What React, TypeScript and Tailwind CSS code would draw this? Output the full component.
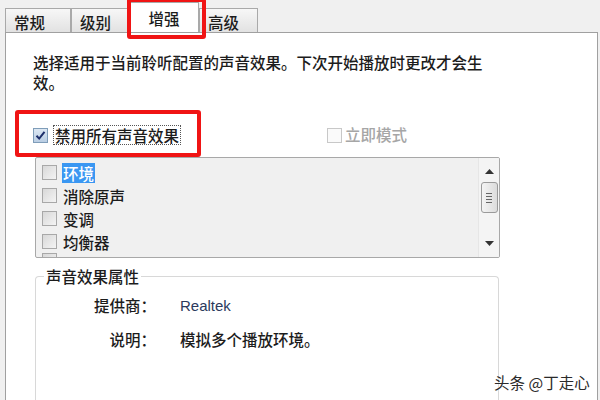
import React from "react";

const FONT = { fontFamily: '"Noto Sans CJK SC", "Noto Sans", sans-serif' };

function Box({ checked = false, disabled = false }: { checked?: boolean; disabled?: boolean }) {
  return (
    <div
      className={
        "w-[15px] h-[15px] shrink-0 flex items-center justify-center border " +
        (disabled
          ? "border-[#c8c8c8] bg-[#fafafa]"
          : checked
          ? "border-[#7f9db9] bg-gradient-to-b from-[#dde8f3] to-[#b9cde3]"
          : "border-[#a8a8a8] bg-gradient-to-br from-[#d8d8d8] to-[#f4f4f4]")
      }
    >
      {checked && (
        <svg width="11" height="11" viewBox="0 0 11 11">
          <path d="M1.5 5.8 L4.2 8.6 L9.5 1.8" fill="none" stroke="#1d2f6b" strokeWidth="2" />
        </svg>
      )}
    </div>
  );
}

function Tab({ label, w, active = false }: { label: string; w: string; active?: boolean }) {
  return (
    <div
      className={
        "border border-[#a9a9a9] border-b-0 flex items-start text-[15.5px] font-medium text-[#1c1c1c] leading-[20px] " +
        w +
        (active ? " h-[30px] bg-white pt-[5px] justify-center" : " h-[24px] bg-gradient-to-b from-[#f7f7f7] to-[#e2e2e2] pt-[3px] pl-[8px]")
      }
    >
      {label}
    </div>
  );
}

export default function App() {
  const items = ["环境", "消除原声", "变调", "均衡器"];
  return (
    <div className="w-[600px] h-[400px] bg-[#f0f0f0] relative overflow-hidden" style={FONT}>
      {/* tabs */}
      <div className="h-[32px] flex items-end pl-[5px]">
        <Tab label="常规" w="w-[66px]" />
        <Tab label="级别" w="w-[58px]" />
        <Tab label="增强" w="w-[70px]" active />
        <Tab label="高级" w="w-[59px]" />
      </div>

      {/* panel */}
      <div className="ml-[5px] w-[593px] h-[368px] border border-b-0 border-[#a0a0a0] bg-white pl-[27px] pt-[19px] text-[#1c1c1c] font-medium">
        <div className="text-[15.5px] leading-[20px] whitespace-nowrap">
          <div>选择适用于当前聆听配置的声音效果。下次开始播放时更改才会生</div>
          <div>效。</div>
        </div>

        {/* checkbox row */}
        <div className="mt-[33px] h-[20px] flex items-center">
          <Box checked />
          <div className="ml-[5px] text-[15.5px] leading-[18px] px-[1px] border border-dotted border-[#555]">禁用所有声音效果</div>
          <div className="ml-[146px] flex items-center">
            <Box disabled />
            <span className="ml-[3px] text-[15.5px] text-[#a6a6a6]">立即模式</span>
          </div>
        </div>

        {/* list box */}
        <div className="mt-[12px] ml-[2px] w-[465px] h-[101px] border border-[#a8a8a8] rounded-[2px] bg-[#f0f0f0] flex overflow-hidden">
          <div className="flex-1 pl-[6px] pt-[3px] overflow-hidden">
            {items.map((t, i) => (
              <div key={t} className="h-[23px] flex items-center">
                <Box />
                <span
                  className={
                    "ml-[5px] text-[15.5px] leading-[20px] px-[1px] " +
                    (i === 0 ? "bg-[#3a97f2] text-white" : "text-[#1c1c1c]")
                  }
                >
                  {t}
                </span>
              </div>
            ))}
            <div className="h-[4px] flex items-start overflow-hidden">
              <Box />
            </div>
          </div>
          <div className="w-[21px] border-l border-[#e6e6e6] bg-[#f4f4f4] flex flex-col items-center">
            <svg className="mt-[11px]" width="9" height="5" viewBox="0 0 9 5">
              <path d="M0 5 L4.5 0 L9 5 Z" fill="#333" />
            </svg>
            <div className="mt-[8px] w-[17px] h-[31px] border border-[#9a9a9a] rounded-[3px] bg-gradient-to-r from-[#f4f4f4] to-[#dcdcdc] flex flex-col items-center justify-center gap-[2px]">
              <div className="w-[6px] h-[1px] bg-[#666]" />
              <div className="w-[6px] h-[1px] bg-[#666]" />
              <div className="w-[6px] h-[1px] bg-[#666]" />
              <div className="w-[6px] h-[1px] bg-[#666]" />
            </div>
            <svg className="mt-auto mb-[11px]" width="9" height="5" viewBox="0 0 9 5">
              <path d="M0 0 L4.5 5 L9 0 Z" fill="#333" />
            </svg>
          </div>
        </div>

        {/* group box */}
        <div className="mt-[18px] ml-[2px] w-[464px] h-[130px] border border-b-0 border-[#d8d8d8] rounded-t-[4px] relative">
          <div className="absolute left-[8px] top-[-11px] bg-white px-[2px] text-[15.5px] leading-[20px]">声音效果属性</div>
          <div className="flex items-center mt-[18px] h-[22px]">
            <div className="w-[120px] text-right text-[15.5px]">提供商：</div>
            <div className="ml-[24px] text-[15px] font-normal text-[#2b3a5c]" style={{ fontFamily: '"Liberation Sans", Arial, sans-serif' }}>Realtek</div>
          </div>
          <div className="flex items-center mt-[12px] h-[22px]">
            <div className="w-[120px] text-right text-[15.5px]">说明：</div>
            <div className="ml-[24px] text-[15.5px]">模拟多个播放环境。</div>
          </div>
        </div>
      </div>

      {/* red highlight boxes */}
      <div className="absolute left-[127px] top-[-2px] w-[79px] h-[41px] border-[4px] border-[#f01414] rounded-[3px]" />
      <div className="absolute left-[15px] top-[110px] w-[186px] h-[47px] border-[4px] border-[#f01414] rounded-[3px]" />

      {/* watermark */}
      <div className="absolute left-[494px] top-[371px] text-[15.5px] leading-[22px] text-[#2a2a2a]" style={{ textShadow: "0 0 2px #fff" }}>
        头条 @丁走心
      </div>
    </div>
  );
}
